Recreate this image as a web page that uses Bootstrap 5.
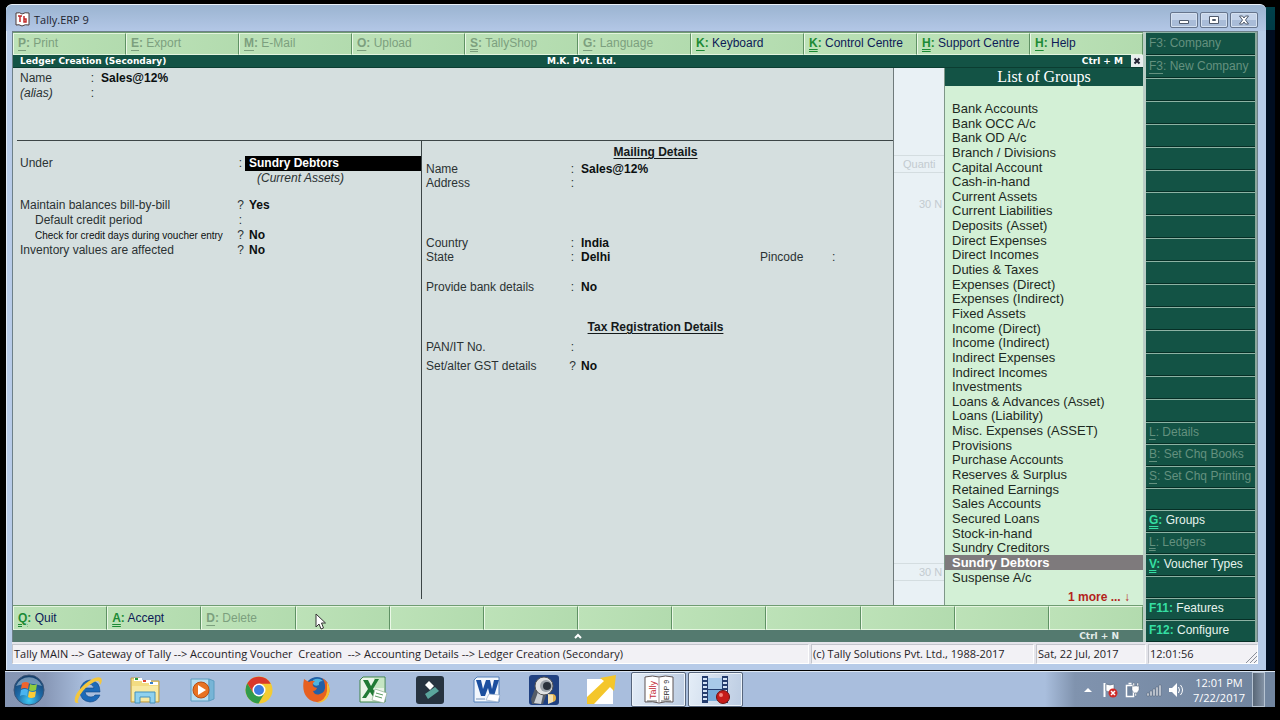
<!DOCTYPE html>
<html lang="en">
<head>
<meta charset="utf-8">
<meta name="viewport" content="width=device-width, initial-scale=1">
<title>Tally.ERP 9</title>
<link href="https://cdn.jsdelivr.net/npm/bootstrap@5.3.0/dist/css/bootstrap.min.css" rel="stylesheet">
<style>
  body { background: #000; min-height: 100vh; font-family: "Liberation Sans", Arial, sans-serif; font-size: 12px; line-height: 15px; color: #2b3233; }
  button, input { font: inherit; color: inherit; line-height: inherit; }
  .desk { margin: 0 5px 0 6px; padding: 4px 9px 0 0; background: linear-gradient(#000 7px, #00404a 7px, #003a45 30px, #000d20 30px); }
  .win { background: #b7cbe8; border-top: 1px solid #e9f1fa; border-radius: 6px 6px 0 0; padding: 0 8px 6px 6px; box-shadow: inset 1px 0 #dde8f6; }
  .caption { height: 26px; margin: 0 -8px 0 -6px; padding: 3px 8px 0 9px; background: linear-gradient(#9bb4d1, #b3c7e6); border-radius: 6px 6px 0 0; font-family: "Open Sans", sans-serif; font-size: 11px; color: #1c2430; }
  .capbtns { gap: 2px; }
  .capbtn { width: 28px; height: 16px; padding: 0; border: 1px solid #66758d; border-radius: 2px; background: linear-gradient(#c4d3e9 50%, #a9bcd8 50%); box-shadow: inset 0 0 0 1px #d5e1f0; }
  .app { border: 1px solid #6d8088; border-bottom: 0; background: #6f8f83; }
  .bar { background: #b8dfb4; border-top: 1px solid #6f9c72; }
  .bar > * { flex: 1 1 0; min-width: 0; height: 100%; text-align: left; border: 0; border-left: 1px solid #eaf8e6; border-right: 1px solid #5f9164; border-top: 1px solid #e4f5df; border-bottom: 1px solid #e4f5df; background: linear-gradient(100deg, #bde2b8, #b2dbae); padding: 0 0 1px 4px; white-space: nowrap; color: #0d1a56; }
  .bar b { color: #1d8a35; font-weight: 700; }
  .bar .off, .bar .off b { color: #7c9f7e; }
  .topbar { height: 23px; }
  .botbar { height: 25px; }
  .botbar > * { padding-bottom: 0; }
  .u1 { text-decoration: underline; text-decoration-thickness: 1px; text-underline-offset: 3px; }
  .u2 { text-decoration: underline double; text-decoration-thickness: 1px; text-underline-offset: 2px; }
  .heading { height: 13px; background: #135345; color: #fff; font: bold 9px/13px "DejaVu Sans", sans-serif; padding-left: 7px; display: grid; grid-template-columns: 1fr auto 1fr; border-bottom: 1px solid #0b3d31; }
  .closex { width: 12px; height: 12px; padding: 0; border: 0; background: #e8eeee; }
  .panel { flex: 1; min-width: 0; background: #d5dfdf; border-right: 1px solid #6f7a7b; padding: 3px 0 6px 4px; }
  .master { height: 70px; border-bottom: 1px solid #3c4546; padding-left: 3px; }
  .cols { display: grid; grid-template-columns: 405fr 471fr; }
  .colA { border-right: 1px solid #3c4546; padding: 15px 0 0 3px; }
  .colB { padding: 4px 0 0 4px; }
  .fld { display: grid; grid-template-columns: 216px 9px 1fr; height: 15px; align-items: center; white-space: nowrap; }
  .fld.nm { grid-template-columns: 68px 9px 1fr; }
  .fld.ml { grid-template-columns: 142px 9px 1fr; height: 14px; }
  .fld.pin { grid-template-columns: 142px 9px 3fr 72px 1fr; }
  .fld > span { justify-self: center; }
  .fld input { border: 0; background: none; padding: 0 0 0 4px; width: 100%; min-width: 0; height: 15px; font-weight: 700; color: #0b0f10; outline: 0; border-radius: 0; }
  .fld .sel { background: #000; color: #fff; }
  .sub { padding-left: 15px; }
  .tight { font-size: 10px; color: #0b0f10; }
  .sp2 { margin-top: 2px; } .sp5 { margin-top: 5px; } .sp12 { margin-top: 12px; } .sp26 { margin-top: 26px; } .sp46 { margin-top: 46px; }
  .sect { font-weight: 700; font-size: 12px; line-height: 15px; text-align: center; text-decoration: underline; text-underline-offset: 2px; margin-bottom: 0; color: #14191a; padding-right: 8px; }
  .back { width: 50px; background: #e9f1f5; color: #c3cbd0; font-size: 11px; overflow: hidden; padding-left: 9px; white-space: nowrap; }
  .back div { border-top: 1px solid #d4dde0; border-bottom: 1px solid #d4dde0; padding-top: 1px; height: 18px; margin-left: -9px; padding-left: 9px; }
  .back .num { padding-left: 16px; }
  .backhead { margin-top: 87px; }
  .groups { width: 199px; background: #d3f0d6; border-left: 1px solid #7e9788; }
  .groups h2 { margin: 0; height: 18px; background: #135345; color: #fff; font: 16px/17px "Liberation Serif", serif; text-align: center; }
  .groups ul { margin: 15px 0 0; padding: 0; list-style: none; flex: 1; }
  .groups li { flex: 1 1 0; min-height: 14px; padding-left: 7px; font-size: 13px; line-height: 15px; color: #1d2922; white-space: nowrap; }
  .groups li.hot { background: #7e7a7c; color: #fff; font-weight: 700; }
  .more { height: 21px; color: #b3241c; font-weight: 700; padding: 6px 13px 0 0; text-align: right; }
  .strip { height: 12px; background: #547a6f; color: #e3ecea; font: bold 9px/12px "DejaVu Sans", sans-serif; display: grid; grid-template-columns: 1fr auto 1fr; }
  .side { width: 114px; flex: none; background: #135345; border-left: 3px solid #b9cdc5; border-right: 2px solid #8aa79c; }
  .side > * { flex: 23 1 0; min-height: 0; display: block; width: 100%; text-align: left; background: #135345; border: 0; border-top: 1px solid #8db3a4; border-bottom: 1px solid #062f26; padding: 0 0 0 3px; color: #e6f3ee; white-space: nowrap; overflow: hidden; }
  .side .lo { flex-grow: 22; }
  .side b { color: #35dfa3; font-weight: 700; }
  .side .off, .side .off b { color: #64917f; font-weight: 400; }
  .stat { height: 22px; padding-top: 2px; background: #e4e4ea; font-family: "Open Sans", sans-serif; font-size: 11px; color: #1f2226; }
  .stat div { background: #f2f1f5; border: 1px solid #c3c5cc; border-right-color: #fff; border-bottom-color: #fff; padding: 0 1px; line-height: 17px; white-space: nowrap; margin-right: 2px; }
  .s2 { width: 223px; } .s3 { width: 110px; } .s4 { width: 110px; position: relative; }
  .grip { position: absolute; right: 0; bottom: 0; }
  .task { height: 36px; margin: 1px 5px 13px 5px; border-top: 1px solid #dbe6f3; background: linear-gradient(90deg, #8595b3 0, #8797b6 40px, #a9bedd 80px, #a9bedd 1040px, #8093ae 1070px, #71859f 1250px); }
  .tk { width: 57px; height: 35px; padding: 0; border: 1px solid transparent; background: none; display: grid; place-items: center; }
  .tk.start { width: 54px; padding-right: 6px; }
  .tk.on { border-color: #56657c; border-radius: 2px; width: 55px; background: linear-gradient(100deg, #e4edf7, #bccce2); box-shadow: inset 0 0 0 1px #eef4fa; margin-left: 2px; }
  .clock { font: 11px/15px "Open Sans", sans-serif; color: #fff; text-align: center; width: 62px; }
  .peek { width: 13px; height: 35px; padding: 0; border: 1px solid #b6c3d2; background: linear-gradient(90deg, #596777, #8392a5); margin: 0 10px 0 2px; }
  .ptr { position: absolute; left: 18px; top: 6px; }
</style>
</head>
<body class="d-flex flex-column">
<main class="desk flex-grow-1 d-flex flex-column">
  <div class="win flex-grow-1 d-flex flex-column">
    <header class="caption d-flex align-items-center">
      <svg width="15" height="15" viewBox="0 0 15 15" class="me-1"><path d="M1 1q4-1 6 1q3-2 7-1v12q-4-1-7 1q-3-2-6-1z" fill="#fff" stroke="#4c3b3b"/><path d="M3 4h4M5 4v6M9 4v6h2v-3H9" stroke="#c22a2a" stroke-width="1.5" fill="none"/></svg>
      <span class="me-auto">Tally.ERP 9</span>
      <div class="capbtns d-flex">
        <button class="capbtn d-flex justify-content-center align-items-center" aria-label="Minimize"><svg width="12" height="12"><path d="M1.500 6.500h9v3h-9z" fill="#fff" stroke="#4f5a6c"/></svg></button>
        <button class="capbtn d-flex justify-content-center align-items-center" aria-label="Maximize"><svg width="12" height="12"><path d="M1.500 2.500h9v7h-9z" fill="#fff" stroke="#4f5a6c"/><path d="M4.500 5.500h3v1h-3z" fill="#fff" stroke="#4f5a6c"/></svg></button>
        <button class="capbtn d-flex justify-content-center align-items-center" aria-label="Close"><svg width="12" height="12"><path d="M1.500 2h3l1.500 2l1.500-2h3l-3 4l3 4h-3l-1.500-2l-1.500 2h-3l3-4z" fill="#fff" stroke="#4f5a6c"/></svg></button>
      </div>
    </header>

    <div class="app flex-grow-1 d-flex">
      <div class="flex-grow-1 d-flex flex-column">
        <nav class="bar topbar d-flex">
          <button class="off"><b class="u1">P</b><b>:</b> Print</button>
          <button class="off"><b class="u1">E</b><b>:</b> Export</button>
          <button class="off"><b class="u1">M</b><b>:</b> E-Mail</button>
          <button class="off"><b class="u1">O</b><b>:</b> Upload</button>
          <button class="off"><b class="u2">S</b><b>:</b> TallyShop</button>
          <button class="off"><b class="u1">G</b><b>:</b> Language</button>
          <button><b class="u1">K</b><b>:</b> Keyboard</button>
          <button><b class="u2">K</b><b>:</b> Control Centre</button>
          <button><b class="u2">H</b><b>:</b> Support Centre</button>
          <button><b class="u1">H</b><b>:</b> Help</button>
        </nav>
        <div class="heading">
          <span>Ledger Creation (Secondary)</span><span>M.K. Pvt. Ltd.</span>
          <span class="d-flex justify-content-end gap-2"><span>Ctrl + M</span><button class="closex d-flex" aria-label="Close form"><svg width="12" height="12"><path d="M3.500 3.500l5 5M8.500 3.500l-5 5" stroke="#223" stroke-width="2"/></svg></button></span>
        </div>

        <div class="flex-grow-1 d-flex">
          <form class="panel d-flex flex-column">
            <div class="master">
              <div class="fld nm"><label for="nm">Name</label><span>:</span><input id="nm" value="Sales@12%"></div>
              <div class="fld nm"><label for="al"><i>(alias)</i></label><span>:</span><input id="al"></div>
            </div>
            <div class="cols flex-grow-1">
              <div class="colA">
                <div class="fld"><label for="un">Under</label><span>:</span><input id="un" class="sel" value="Sundry Debtors"></div>
                <div class="fld"><i></i><i></i><i class="ps-2 ms-1">(Current Assets)</i></div>
                <div class="fld sp12"><label for="mb">Maintain balances bill-by-bill</label><span>?</span><input id="mb" value="Yes"></div>
                <div class="fld"><label for="dc" class="sub">Default credit period</label><span>:</span><input id="dc"></div>
                <div class="fld"><label for="cc" class="sub tight">Check for credit days during voucher entry</label><span>?</span><input id="cc" value="No"></div>
                <div class="fld"><label for="iv">Inventory values are affected</label><span>?</span><input id="iv" value="No"></div>
              </div>
              <div class="colB">
                <h3 class="sect">Mailing Details</h3>
                <div class="fld ml sp2"><label for="mn">Name</label><span>:</span><input id="mn" value="Sales@12%"></div>
                <div class="fld ml"><label for="ad">Address</label><span>:</span><input id="ad"></div>
                <div class="fld ml sp46"><label for="co">Country</label><span>:</span><input id="co" value="India"></div>
                <div class="fld ml pin"><label for="st">State</label><span>:</span><input id="st" value="Delhi"><label for="pc">Pincode</label><div class="d-flex">:<input id="pc"></div></div>
                <div class="fld ml mt-3"><label for="bk">Provide bank details</label><span>:</span><input id="bk" value="No"></div>
                <h3 class="sect sp26">Tax Registration Details</h3>
                <div class="fld ml sp5"><label for="pn">PAN/IT No.</label><span>:</span><input id="pn"></div>
                <div class="fld ml sp5"><label for="gs">Set/alter GST details</label><span>?</span><input id="gs" value="No"></div>
              </div>
            </div>
          </form>
          <div class="back d-flex flex-column">
            <div class="backhead">Quanti</div><p class="num mb-auto mt-4">30 N</p><div class="mb-4"><span class="num">30 N</span></div>
          </div>
          <section class="groups d-flex flex-column">
            <h2>List of Groups</h2>
            <ul class="d-flex flex-column">
              <li>Bank Accounts</li><li>Bank OCC A/c</li><li>Bank OD A/c</li><li>Branch / Divisions</li><li>Capital Account</li><li>Cash-in-hand</li><li>Current Assets</li><li>Current Liabilities</li><li>Deposits (Asset)</li><li>Direct Expenses</li><li>Direct Incomes</li><li>Duties &amp; Taxes</li><li>Expenses (Direct)</li><li>Expenses (Indirect)</li><li>Fixed Assets</li><li>Income (Direct)</li><li>Income (Indirect)</li><li>Indirect Expenses</li><li>Indirect Incomes</li><li>Investments</li><li>Loans &amp; Advances (Asset)</li><li>Loans (Liability)</li><li>Misc. Expenses (ASSET)</li><li>Provisions</li><li>Purchase Accounts</li><li>Reserves &amp; Surplus</li><li>Retained Earnings</li><li>Sales Accounts</li><li>Secured Loans</li><li>Stock-in-hand</li><li>Sundry Creditors</li><li class="hot">Sundry Debtors</li><li>Suspense A/c</li>
            </ul>
            <div class="more">1 more ... <span class="fw-normal">↓</span></div>
          </section>
        </div>

        <nav class="bar botbar d-flex">
          <button><b class="u2">Q</b><b>:</b> Quit</button>
          <button><b class="u2">A</b><b>:</b> Accept</button>
          <button class="off"><b class="u1">D</b><b>:</b> Delete</button>
          <div class="position-relative"><svg class="ptr" width="12" height="18" viewBox="0 0 12 18"><path d="M1 1v13l3-3l2 5l2.500-1l-2-5h4z" fill="#fff" stroke="#333"/></svg></div>
          <div></div><div></div><div></div><div></div><div></div><div></div><div></div><div></div>
        </nav>
        <div class="strip"><span></span><svg width="10" height="12"><path d="M2 8l3-3l3 3" fill="none" stroke="#fff" stroke-width="2"/></svg><span class="text-end pe-4">Ctrl + N</span></div>
      </div>

      <aside class="side d-flex flex-column">
        <button class="off">F3: Company</button>
        <button class="off"><b class="u1">F3</b>: New Company</button>
        <div></div><div></div><div></div><div></div><div></div><div></div><div></div><div></div><div></div><div></div><div></div><div></div><div></div><div></div><div></div>
        <button class="off lo"><b class="u1">L</b>: Details</button>
        <button class="off lo"><b class="u1">B</b>: Set Chq Books</button>
        <button class="off lo"><b class="u1">S</b>: Set Chq Printing</button>
        <div class="lo"></div>
        <button class="lo"><b class="u2">G</b><b>:</b> Groups</button>
        <button class="off lo"><b class="u2">L</b>: Ledgers</button>
        <button class="lo"><b class="u2">V</b><b>:</b> Voucher Types</button>
        <div class="lo"></div>
        <button class="lo"><b>F11:</b> Features</button>
        <button class="lo"><b>F12:</b> Configure</button>
      </aside>
    </div>

    <footer class="stat d-flex">
      <div class="flex-grow-1">Tally MAIN --&gt; Gateway of Tally --&gt; Accounting Voucher&nbsp; Creation&nbsp; --&gt; Accounting Details --&gt; Ledger Creation (Secondary)</div>
      <div class="s2">(c) Tally Solutions Pvt. Ltd., 1988-2017</div>
      <div class="s3">Sat, 22 Jul, 2017</div>
      <div class="s4 me-0">12:01:56<svg class="grip" width="12" height="12"><path d="M1 12L12 1M5 12l7-7M9 12l3-3" stroke="#8b8f98"/></svg></div>
    </footer>
  </div>
</main>

<nav class="task d-flex align-items-center">
  <button class="tk start" aria-label="Start"><svg width="32" height="32" viewBox="0 0 32 32"><defs><radialGradient id="orb" cx=".5" cy=".85" r=".9"><stop offset="0" stop-color="#3fc8f2"/><stop offset=".45" stop-color="#1d6aa8"/><stop offset="1" stop-color="#14365f"/></radialGradient></defs><circle cx="16" cy="16" r="15" fill="url(#orb)" stroke="#3c5577"/><path d="M3 12q13-5 26 0A14 14 0 0 0 3 12z" fill="#dbe8f4" opacity=".45"/><path d="M9 9q4-2 7 0l-1 6q-4-2-7 0z" fill="#f0642c"/><path d="M17 10q4 2 7 0l-1 6q-4 2-7 0z" fill="#8fcb3f"/><path d="M8 16q4-2 7 0l-1 6q-4-2-7 0z" fill="#49b4f0"/><path d="M16 17q4 2 7 0l-1 6q-4 2-7 0z" fill="#fbcb35"/></svg></button>
  <button class="tk" aria-label="Internet Explorer"><svg width="30" height="30" viewBox="0 0 30 30"><path d="M27 17H12q1 5 6 5q3 0 4-2h5q-3 7-10 7q-10-1-10-11q1-10 10-11q10 1 10 12zM12 13h9q-1-4-5-4q-3 0-4 4z" fill="#1d6ab8" stroke="#0f4482" stroke-width=".6"/><path d="M2 27Q0 20 12 9Q23 0 28 3q2 3-1 7q0-6-6-3Q12 12 7 20q-4 8-1 7q-2 2-4 0z" fill="#f4c73c"/></svg></button>
  <button class="tk" aria-label="File Explorer"><svg width="32" height="30" viewBox="0 0 32 30"><path d="M2 3h9l2 3h17v21H2z" fill="#f3dc82" stroke="#bc9b46"/><path d="M5 3h8v3H5zM13 5h9v3h-9zM20 7h9v3h-9z" fill="#fff"/><path d="M6 3h3v2H6z" fill="#279b3f"/><path d="M14 5h3v2h-3z" fill="#db4233"/><path d="M21 7h3v2h-3z" fill="#387fcb"/><path d="M3 11h26v15H3z" fill="#f8e9a2"/><path d="M6 28V17h20v11h-5v-6H11v6z" fill="#8fd1ef" stroke="#4590bb"/></svg></button>
  <button class="tk" aria-label="Media Player"><svg width="28" height="28" viewBox="0 0 28 28"><path d="M3 3h18v22H3z" fill="#b7dcef" stroke="#5d9dc0"/><path d="M21 3l5 2v18l-5 2z" fill="#77b5d6" stroke="#5d9dc0"/><circle cx="13" cy="14" r="8" fill="#e87222" stroke="#b94e14"/><path d="M10 9l8 5l-8 5z" fill="#fff"/></svg></button>
  <button class="tk" aria-label="Chrome"><svg width="28" height="28" viewBox="0 0 28 28"><circle cx="14" cy="14" r="13.500" fill="#f4cb32"/><path d="M2.300 7.300A13.500 13.500 0 0 0 13.500 27.500L19.500 17.200L14 14L8.500 17.200z" fill="#319b4a"/><path d="M2.300 7.300A13.500 13.500 0 0 1 25.700 7.800H14L8.500 17.200z" fill="#d9382b"/><circle cx="14" cy="14" r="6.500" fill="#fff"/><circle cx="14" cy="14" r="5" fill="#3d7de0"/></svg></button>
  <button class="tk" aria-label="Firefox"><svg width="30" height="30" viewBox="0 0 30 30"><circle cx="16" cy="14" r="12" fill="#225fa5"/><path d="M12 5q6-3 10 1q-5 0-4 4q-4 2-6-1z" fill="#4fb4df"/><path d="M3 4q3 2 5 3q3-2 6-1q-4 3-1 6l3 1q-1 3-4 3q2 5 7 3q6-2 5-9q0-4-3-7q6 3 7 9q2 8-5 13q-7 4-14 0Q0 19 3 4z" fill="#e76020"/><path d="M26 7q4 6 2 12q-3 9-13 9q10-3 11-12z" fill="#f8bd31"/></svg></button>
  <button class="tk" aria-label="Excel"><svg width="30" height="30" viewBox="0 0 30 30"><path d="M5 2h22v25H2V5z" fill="#eaf5e8" stroke="#3d8547"/><path d="M16 3h10v10H16z" fill="#c5e6c3"/><path d="M5 5h5l3 6l4-7h4l-6 10l6 9h-5l-4-6l-4 6H4l6-9z" fill="#207a35"/><path d="M17 14l12 4l-3 10l-12-3z" fill="#fff" stroke="#8dad90" stroke-width=".7"/><path d="M18 18l7 2M17 21l7 2" stroke="#5c9c64"/></svg></button>
  <button class="tk" aria-label="Filmora"><svg width="28" height="28" viewBox="0 0 28 28"><rect x="0" y="0" width="28" height="28" rx="3" fill="#263340"/><path d="M13 5l5 5l-4 4l-5-5z" fill="#fff"/><path d="M9 18l10-7l4 4l-11 8z" fill="#5aa59d"/></svg></button>
  <button class="tk" aria-label="Word"><svg width="30" height="30" viewBox="0 0 30 30"><path d="M5 2h22v25H2V5z" fill="#f2f7fd" stroke="#517fb9"/><path d="M4 5h5l2 9l3-9h4l2 9l2-9h5l-5 16h-4l-2-8l-3 8H9z" fill="#1b4f9f"/><path d="M17 19l11 1l-2 7l-12-2z" fill="#fff" stroke="#93abc9" stroke-width=".7"/><path d="M4 24h9" stroke="#7694bb"/></svg></button>
  <button class="tk" aria-label="Camera tool"><svg width="30" height="30" viewBox="0 0 30 30"><rect width="30" height="30" rx="3" fill="#204181"/><path d="M2 24l5-13l12 4l-5 14H3z" fill="#555d68"/><path d="M5 28l4-11l5 3l-2 9z" fill="#cbd0d5"/><circle cx="15" cy="11" r="9" fill="#e0e2e3" stroke="#555" /><circle cx="17" cy="11" r="6" fill="#9ba3aa"/><circle cx="18" cy="11" r="4" fill="#29323c"/><circle cx="23" cy="23" r="4" fill="#e4b34c"/><path d="M19 19l5 1v7l-5 2z" fill="#f2e1b2"/></svg></button>
  <button class="tk" aria-label="Arrow"><svg width="32" height="30" viewBox="0 0 32 30"><path d="M2 4h26v25H2z" fill="#fff"/><path d="M2 22L19 6l-4-3L31 0l-2 16l-4-4L9 29H2z" fill="#f4c62b"/></svg></button>
  <button class="tk on" aria-label="Tally.ERP 9"><svg width="30" height="30" viewBox="0 0 30 30"><path d="M1 2q8-2 14 0q6-2 14 0v25q-8-1-14 1q-6-2-14-1z" fill="#fff" stroke="#5f5555"/><path d="M15 2v26" stroke="#9b9494"/><path d="M3 26h10M17 26h10" stroke="#666"/><text transform="translate(12 24) rotate(-90)" font-size="9" fill="#c42d3a" font-family="Liberation Sans">Tally</text><text transform="translate(25 25) rotate(-90)" font-size="7" fill="#252525" font-family="Liberation Sans">ERP 9</text></svg></button>
  <button class="tk on" aria-label="Recorder"><svg width="30" height="30" viewBox="0 0 30 30"><path d="M1 1h6v27H1zM21 1h6v27h-6z" fill="#253d6e"/><path d="M2 4h4M2 8h4M2 12h4M2 16h4M2 20h4M2 24h4M22 4h4M22 8h4M22 12h4M22 16h4" stroke="#d4e3f5" stroke-width="2"/><path d="M7 3h14v11H7z" fill="#a8c9e9"/><path d="M7 15h14v11H7z" fill="#78acd9"/><path d="M7 14.500h14" stroke="#253d6e"/><circle cx="22" cy="22" r="6.500" fill="#c61c19" stroke="#701311"/><circle cx="20" cy="20" r="2" fill="#f6857d"/></svg></button>

  <div class="ms-auto d-flex align-items-center">
    <svg width="100" height="20" viewBox="0 0 100 20"><path d="M0 12l4-4l4 4z" fill="#fff"/>
      <path d="M20.500 3v14" stroke="#fff" stroke-width="2"/><path d="M22 4q4 2 8 0v7q-4 2-8 0z" fill="#fff" stroke="#59687c" stroke-width=".6"/><circle cx="29" cy="13" r="4.500" fill="#cf2a26"/><path d="M27 11l4 4M31 11l-4 4" stroke="#fff" stroke-width="1.500"/>
      <path d="M42.500 5.500h7v11h-7zM44.500 3.500h3" fill="#71859f" stroke="#fff" stroke-width="1.500"/><path d="M48 6h7v4l-2 3h-3l-2-3zM49 3h1.500v3H49zM53 3h1.500v3H53zM51 13h1.500v3H51z" fill="#fff" stroke="#59687c" stroke-width=".4"/>
      <path d="M63 13h2v3h-2zM66 11h2v5h-2zM69 9h2v7h-2zM72 7h2v9h-2zM75 5h2v11h-2z" fill="#d7dde5" stroke="#566276" stroke-width=".5"/>
      <path d="M85 8h3l5-5v14l-5-5h-3z" fill="#fff"/><path d="M94.500 7q2 3 0 6M96.500 5q4 5 0 10" fill="none" stroke="#fff"/></svg>
    <div class="clock ms-1">12:01 PM<br>7/22/2017</div>
    <button class="peek" aria-label="Show desktop"></button>
  </div>
</nav>
<script src="https://cdn.jsdelivr.net/npm/bootstrap@5.3.0/dist/js/bootstrap.bundle.min.js"></script>
</body>
</html>
